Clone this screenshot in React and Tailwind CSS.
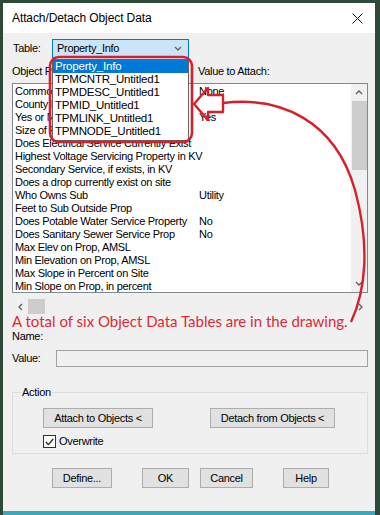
import React from "react"

const rows = [
  ["Common Name of Property", "None"],
  ["County Located In", ""],
  ["Yes or No Property Is Zoned", "Yes"],
  ["Size of Property in Acres", ""],
  ["Does Electrical Service Currently Exist", ""],
  ["Highest Voltage Servicing Property in KV", ""],
  ["Secondary Service, if exists, in KV", ""],
  ["Does a drop currently exist on site", ""],
  ["Who Owns Sub", "Utility"],
  ["Feet to Sub Outside Prop", ""],
  ["Does Potable Water Service Property", "No"],
  ["Does Sanitary Sewer Service Prop", "No"],
  ["Max Elev on Prop, AMSL", ""],
  ["Min Elevation on Prop, AMSL", ""],
  ["Max Slope in Percent on Site", ""],
  ["Min Slope on Prop, in percent", ""],
]

const tables = [
  "Property_Info",
  "TPMCNTR_Untitled1",
  "TPMDESC_Untitled1",
  "TPMID_Untitled1",
  "TPMLINK_Untitled1",
  "TPMNODE_Untitled1",
]

// Classic Win dialog button
function Btn({ children, className = "" }) {
  return (
    <button
      className={
        "h-[20px] bg-[#e1e1e1] border border-[#adadad] text-[11px] leading-[18px] text-black " +
        className
      }
    >
      {children}
    </button>
  )
}

function Chevron({ dir = "down", className = "" }) {
  const d = dir === "down" ? "M1 1 L4 4 L7 1" : dir === "up" ? "M1 4 L4 1 L7 4" : dir === "left" ? "M4 1 L1 4 L4 7" : "M1 1 L4 4 L1 7"
  const w = dir === "down" || dir === "up" ? 8 : 5
  const h = dir === "down" || dir === "up" ? 5 : 8
  return (
    <svg width={w} height={h} viewBox={`0 0 ${w} ${h}`} className={className}>
      <path d={d} fill="none" stroke="#606060" strokeWidth="1.3" />
    </svg>
  )
}

export default function App() {
  return (
    <div className="relative w-[380px] h-[515px] overflow-hidden bg-[#2c4a37] pt-[3px] pl-[3px] pr-[5px] font-['Liberation_Sans',Arial,sans-serif] text-black">
      <div className="flex flex-col h-[512px] border-b-[4px] border-[#3fa7b5]">
        {/* title bar */}
        <div className="h-[30px] bg-white flex items-center justify-between pl-[9px] pr-[12px]">
          <span className="text-[12px] tracking-[-0.1px]">Attach/Detach Object Data</span>
          <svg width="11" height="11" viewBox="0 0 11 11">
            <path d="M0.5 0.5 L10.5 10.5 M10.5 0.5 L0.5 10.5" stroke="#111" strokeWidth="1" />
          </svg>
        </div>

        <div className="flex-1 bg-[#f0f0f0] pl-[9px] pr-[7px] pt-[6px] text-[11px] leading-[13px] tracking-[-0.3px]">
          {/* table picker */}
          <div className="flex items-center h-[19px]">
            <span className="w-[40px] pl-[1px]">Table:</span>
            <div className="w-[137px] h-[19px] border border-[#0078d7] bg-[#cce4f7] flex items-center justify-between pl-[4px] pr-[6px]">
              <span>Property_Info</span>
              <Chevron />
            </div>
          </div>

          <div className="flex mt-[7px] h-[13px]">
            <span className="w-[186px]">Object Property:</span>
            <span>Value to Attach:</span>
          </div>

          {/* list */}
          <div className="mt-[5px] h-[210px] border border-[#828790] bg-white flex">
            <div className="flex-1 pt-[1px] pl-[2px] overflow-hidden">
              {rows.map(([name, val]) => (
                <div key={name} className="flex h-[13px] whitespace-nowrap">
                  <span className="w-[184px] shrink-0">{name}</span>
                  <span>{val}</span>
                </div>
              ))}
            </div>
            <div className="w-[16px] bg-[#f0f0f0] flex flex-col items-center">
              <div className="h-[17px] flex items-center justify-center">
                <Chevron dir="up" />
              </div>
              <div className="w-[15px] h-[69px] bg-[#cdcdcd]" />
              <div className="flex-1" />
              <div className="h-[17px] flex items-center justify-center">
                <Chevron dir="down" />
              </div>
            </div>
          </div>

          {/* horizontal scroll */}
          <div className="mt-[6px] h-[15px] flex items-center">
            <div className="w-[16px] flex justify-center">
              <Chevron dir="left" />
            </div>
            <div className="w-[17px] h-[15px] bg-[#cdcdcd]" />
            <div className="flex-1" />
            <div className="w-[16px] flex justify-center">
              <Chevron dir="right" />
            </div>
          </div>

          <div className="h-[14px] leading-[14px] whitespace-nowrap text-[15px] tracking-[0px] text-[#dd2a36] font-['Lato',sans-serif]">
            A total of six Object Data Tables are in the drawing.
          </div>

          <div className="mt-[2px] h-[13px]">Name:</div>

          <div className="mt-[7px] flex items-center h-[17px]">
            <span className="w-[44px]">Value:</span>
            <div className="flex-1 h-[17px] border border-[#a0a0a0] bg-[#f0f0f0]" />
          </div>

          {/* action group */}
          <fieldset className="mt-[19px] border border-[#dcdcdc] pb-[5px] pt-[9px]">
            <legend className="ml-[8px] px-[1px] leading-[13px]">Action</legend>
            <div className="flex ml-[30px]">
              <Btn className="w-[110px]">Attach to Objects &lt;</Btn>
              <Btn className="w-[125px] ml-[57px]">Detach from Objects &lt;</Btn>
            </div>
            <div className="mt-[7px] ml-[30px] flex items-center h-[13px]">
              <div className="w-[13px] h-[13px] border border-[#333] bg-white flex items-center justify-center">
                <svg width="9" height="8" viewBox="0 0 9 8">
                  <path d="M0.8 4 L3.4 6.6 L8.2 1" fill="none" stroke="#222" strokeWidth="1.3" />
                </svg>
              </div>
              <span className="ml-[3px]">Overwrite</span>
            </div>
          </fieldset>

          <div className="mt-[14px] flex">
            <Btn className="w-[60px] ml-[40px]">Define...</Btn>
            <Btn className="w-[47px] ml-[30px]">OK</Btn>
            <Btn className="w-[53px] ml-[11px]">Cancel</Btn>
            <Btn className="w-[46px] ml-[30px]">Help</Btn>
          </div>
        </div>
      </div>

      {/* open dropdown list */}
      <div className="absolute left-[52px] top-[59px] w-[137px] h-[82px] bg-white border border-[#646464] text-[11.5px] leading-[13px] tracking-[-0.2px]">
        {tables.map((t, i) => (
          <div
            key={t}
            className={
              i === 0
                ? "h-[13px] pl-[2px] bg-[#0078d7] text-white"
                : "h-[13px] pl-[2px]"
            }
          >
            {t}
          </div>
        ))}
      </div>

      {/* red annotation */}
      <svg className="absolute left-0 top-0 pointer-events-none" width="380" height="515" viewBox="0 0 380 515">
        <rect x="50" y="57" width="142" height="85" rx="9" fill="none" stroke="#d8202c" strokeWidth="2.6" />
        <path
          d="M194 104 L208 88 L208 95 L223 95 L223 112 L208 112 L208 120 Z"
          fill="none"
          stroke="#d8202c"
          strokeWidth="2.4"
          strokeLinejoin="round"
        />
        <path
          d="M223 103 C280 96 335 120 355 190 C370 245 366 290 351 322"
          fill="none"
          stroke="#d8202c"
          strokeWidth="2.4"
        />
      </svg>
    </div>
  )
}
